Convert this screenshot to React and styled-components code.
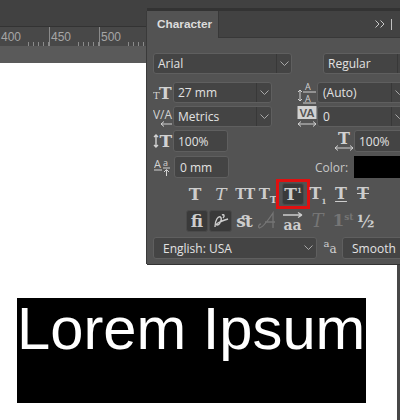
import React from 'react'
import styled, { createGlobalStyle } from 'styled-components'

const Global = createGlobalStyle`
  html, body {
    margin: 0;
    padding: 0;
    background: #fff;
  }
  body {
    font-family: 'Open Sans', 'Liberation Sans', sans-serif;
  }
  * {
    box-sizing: border-box;
  }
`

const Page = styled.div`
  position: relative;
  width: 400px;
  height: 420px;
  overflow: hidden;
  display: flex;
  flex-direction: column;
`

const TopBar = styled.div`
  height: 27px;
  background: #414141;
  border-bottom: 1px solid #333;
`

const Ruler = styled.div`
  height: 19px;
  display: flex;
  margin-left: -1px;
  width: 402px;
  background: #484848;
`

const RulerCell = styled.div`
  width: 50px;
  height: 19px;
  padding: 3px 0 0 1px;
  border-left: 1px solid #8a8a8a;
  font: 12px/14px 'Liberation Sans', sans-serif;
  color: #a6a6a6;
  background-image: repeating-linear-gradient(to right, transparent 0 4px, #8a8a8a 4px 5px);
  background-size: 25px 4px;
  background-position: 24px bottom;
  background-repeat: no-repeat;
`

const Strip = styled.div`
  height: 17px;
  background: #5a5a5a;
`

const Canvas = styled.div`
  flex: 1;
  background: #fff;
  border-right: 3px solid #474747;
  padding: 235px 0 0 17px;
`

const Poster = styled.div`
  width: 349px;
  height: 105px;
  background: #000;
  color: #fff;
  font: 59.7px/61px 'Liberation Sans', Arial, sans-serif;
  white-space: nowrap;
`

const Panel = styled.div`
  position: absolute;
  left: 147px;
  top: 11px;
  width: 270px;
  height: 253px;
  background: #535353;
  box-shadow: 0 -3px 0 #333, -1px 0 0 #3a3a3a, 0 1px 0 #333;
`

const PanelHead = styled.div`
  height: 27px;
  display: flex;
  align-items: center;
  background: #424242;
  border-bottom: 1px solid #383838;
`

const Tab = styled.div`
  width: 72px;
  height: 27px;
  padding-left: 10px;
  background: #535353;
  border-right: 1px solid #383838;
  font: bold 11.8px/27px 'Liberation Sans', sans-serif;
  color: #dcdcdc;
`

const HeadTools = styled.div`
  margin-left: 156px;
  display: flex;
  align-items: center;
  gap: 6px;
  color: #c8c8c8;
`

const HeadBar = styled.span`
  width: 1px;
  height: 11px;
  background: #c0c0c0;
`

const PanelBody = styled.div`
  padding: 15px 0 0 6px;
`

const Row = styled.div`
  display: grid;
  grid-template-columns: ${p => p.$split}px 1fr;
  height: ${p => p.$h}px;
  margin-bottom: ${p => p.$gap}px;
`

const Group = styled.div`
  display: flex;
  align-items: center;
  height: 100%;
`

const IconSlot = styled.div`
  width: ${p => p.$w || 20}px;
  height: 21px;
  flex: none;
  display: flex;
  align-items: center;
  justify-content: center;
  color: #d2d2d2;
`

const Box = styled.div`
  width: ${p => p.$w}px;
  height: 100%;
  flex: none;
  margin-left: ${p => p.$ml || 0}px;
  display: flex;
  align-items: center;
  background: #444;
  border: 1px solid #5f5f5f;
  border-radius: 3px;
  font-size: 12px;
  color: #e2e2e2;
`

const BoxText = styled.span`
  flex: 1;
  padding-left: ${p => p.$pl || 4}px;
  white-space: nowrap;
  overflow: hidden;
`

const Chevron = styled.span`
  width: ${p => p.$w || 15}px;
  height: 100%;
  flex: none;
  display: flex;
  align-items: center;
  justify-content: center;
  border-left: ${p => (p.$plain ? 'none' : '1px solid #383838')};
  color: #a8a8a8;
`

const ColorLabel = styled.span`
  width: 39px;
  font-size: 12px;
  color: #c8c8c8;
`

const Swatch = styled.div`
  width: 60px;
  height: 100%;
  background: #000;
`

const GlyphRow = styled.div`
  display: flex;
  height: ${p => p.$h}px;
  margin: ${p => p.$m};
  align-items: center;
`

const Glyph = styled.div`
  position: relative;
  width: ${p => p.$w}px;
  height: 22px;
  flex: none;
  display: flex;
  align-items: center;
  justify-content: center;
  color: ${p => (p.$off ? '#757575' : '#cdcdcd')};
  font-family: 'DejaVu Serif', serif;
  font-weight: bold;
  font-size: 17px;
  line-height: 22px;
`

const Pressed = styled(Glyph)`
  background: #3a3a3a;
  border: 1px solid #4a4a4a;
  border-radius: 3px;
  margin: 0 ${p => p.$mx || 0}px;
`

const Highlight = styled.span`
  position: absolute;
  left: -7px;
  top: -5px;
  width: 34px;
  height: 30px;
  border: 3px solid #e01010;
`

const Small = styled.span`
  font-size: ${p => p.$s}px;
  font-weight: ${p => p.$w || 'bold'};
  font-style: ${p => p.$i || 'normal'};
  align-self: ${p => p.$a || 'center'};
  line-height: 1;
  margin-top: ${p => p.$mt || 0}px;
  letter-spacing: ${p => p.$ls || 0}px;
  text-decoration: ${p => p.$d || 'none'};
  text-underline-offset: 2px;
`

const AaMark = styled.span`
  display: flex;
  font-family: 'DejaVu Serif', serif;
  color: #cfcfcf;
  line-height: 1;
`

const AaRaised = styled.span`
  font-size: 10px;
  margin-top: -3px;
`

const AaLow = styled.span`
  font-size: 12px;
  margin-top: 1px;
`

const SvgText = styled.text`
  font-family: 'DejaVu Serif', serif;
  font-weight: ${p => p.$w || 'bold'};
  fill: currentColor;
`

const SansText = styled.text`
  font-family: 'Open Sans', sans-serif;
  fill: currentColor;
`

const ChevronDown = () => (
  <svg width="9" height="6" viewBox="0 0 9 6" fill="none" stroke="currentColor">
    <path d="M0.5 0.5 L4.5 4.5 L8.5 0.5" />
  </svg>
)

const ChevronsOut = () => (
  <svg width="10" height="8" viewBox="0 0 10 8" fill="none" stroke="currentColor">
    <path d="M0.5 0.5 L4 4 L0.5 7.5 M5.5 0.5 L9 4 L5.5 7.5" />
  </svg>
)

const SizeIcon = () => (
  <svg width="20" height="20" viewBox="0 0 20 20">
    <SvgText x="0" y="16" fontSize="10" $w="normal">T</SvgText>
    <SvgText x="6" y="16" fontSize="17">T</SvgText>
  </svg>
)

const KernIcon = () => (
  <svg width="20" height="20" viewBox="0 0 20 20" stroke="none">
    <SansText x="0" y="12" fontSize="12" textLength="19" lengthAdjust="spacingAndGlyphs">V/A</SansText>
    <path d="M8 17 H19 M8 17 L11 14.5 M8 17 L11 19.5" stroke="currentColor" fill="none" />
  </svg>
)

const LeadingIcon = () => (
  <svg width="20" height="24" viewBox="0 0 20 24">
    <SansText x="8" y="9" fontSize="9">A</SansText>
    <SansText x="8" y="21" fontSize="9">A</SansText>
    <path d="M6 11 H19 M6 22 H19" stroke="currentColor" fill="none" />
    <path d="M3 9 V20 M1 11 L3 9 L5 11 M1 18 L3 20 L5 18" stroke="currentColor" fill="none" />
  </svg>
)

const TrackIcon = () => (
  <svg width="20" height="22" viewBox="0 0 20 22">
    <rect x="0.5" y="0" width="19" height="13" fill="#d2d2d2" />
    <text x="10" y="11" fontSize="11.5" fontWeight="bold" fontFamily="'Liberation Sans', sans-serif" textAnchor="middle" fill="#535353">VA</text>
    <path d="M1 18 H19 M1 18 L4 15.5 M1 18 L4 20.5 M19 18 L16 15.5 M19 18 L16 20.5" stroke="currentColor" fill="none" />
  </svg>
)

const VScaleIcon = () => (
  <svg width="20" height="20" viewBox="0 0 20 20">
    <SvgText x="6.5" y="16" fontSize="17">T</SvgText>
    <path d="M3 4 V16 M1 6 L3 4 L5 6 M1 14 L3 16 L5 14" stroke="currentColor" strokeWidth="1.4" fill="none" />
  </svg>
)

const HScaleIcon = () => (
  <svg width="20" height="24" viewBox="0 -2 20 24">
    <SvgText x="4" y="13" fontSize="16">T</SvgText>
    <path d="M1 17 H19 M1 17 L4 14.5 M1 17 L4 19.5 M19 17 L16 14.5 M19 17 L16 19.5" stroke="currentColor" fill="none" />
  </svg>
)

const BaselineIcon = () => (
  <svg width="18" height="20" viewBox="0 0 18 20">
    <SansText x="0" y="11" fontSize="11">A</SansText>
    <SansText x="9" y="9" fontSize="9">a</SansText>
    <path d="M0 13 H8 M9 11 H16" stroke="currentColor" fill="none" />
    <path d="M12.5 19 V13 M10 15 L12.5 12.5 L15 15" stroke="currentColor" fill="none" />
  </svg>
)

const SwashIcon = () => (
  <svg width="18" height="18" viewBox="0 0 18 18" fill="none" stroke="currentColor" strokeWidth="1.4">
    <path d="M3 15 C3 8 6 4 8.5 5 C10.5 7 8 13 5 13 C3 12 7 10 16 7" />
    <path d="M10 3 C12 2 13 4 11 6" />
  </svg>
)

const ScriptIcon = () => (
  <svg width="22" height="20" viewBox="0 0 22 20" fill="none" stroke="currentColor" strokeWidth="1.3">
    <path d="M2 17 C6 17 12 8 16 2 L16 17 M8 11 H18" />
    <path d="M2 17 C1 15 2 13 4 13" />
  </svg>
)

const ArrowAaIcon = () => (
  <svg width="22" height="22" viewBox="0 0 22 22">
    <SvgText x="1.5" y="20" fontSize="14">aa</SvgText>
    <path d="M1 5 H20 M20 5 L16 2.5 M20 5 L16 7.5" stroke="currentColor" strokeWidth="1.4" fill="none" />
  </svg>
)

const Select = ({ w, ml, pl, children }) => (
  <Box $w={w} $ml={ml}>
    <BoxText $pl={pl}>{children}</BoxText>
    <Chevron>
      <ChevronDown />
    </Chevron>
  </Box>
)

const Field = ({ w, ml, pl, children }) => (
  <Box $w={w} $ml={ml}>
    <BoxText $pl={pl}>{children}</BoxText>
  </Box>
)

export default function App() {
  return (
    <Page>
      <Global />
      <TopBar />
      <Ruler>
        <RulerCell>400</RulerCell>
        <RulerCell>450</RulerCell>
        <RulerCell>500</RulerCell>
        <RulerCell />
      </Ruler>
      <Strip />
      <Canvas>
        <Poster>Lorem Ipsum</Poster>
      </Canvas>

      <Panel>
        <PanelHead>
          <Tab>Character</Tab>
          <HeadTools>
            <ChevronsOut />
            <HeadBar />
          </HeadTools>
        </PanelHead>
        <PanelBody>
          <Row $split={170} $h={21} $gap={8}>
            <Group>
              <Select w={139}>Arial</Select>
            </Group>
            <Group>
              <Select w={90} pl={4}>Regular</Select>
            </Group>
          </Row>
          <Row $split={144} $h={21} $gap={3}>
            <Group>
              <IconSlot><SizeIcon /></IconSlot>
              <Select w={99}>27 mm</Select>
            </Group>
            <Group>
              <IconSlot><LeadingIcon /></IconSlot>
              <Select w={90} pl={5}>(Auto)</Select>
            </Group>
          </Row>
          <Row $split={144} $h={21} $gap={3}>
            <Group>
              <IconSlot><KernIcon /></IconSlot>
              <Select w={99}>Metrics</Select>
            </Group>
            <Group>
              <IconSlot><TrackIcon /></IconSlot>
              <Select w={90} pl={5}>0</Select>
            </Group>
          </Row>
          <Row $split={181} $h={22} $gap={4}>
            <Group>
              <IconSlot><VScaleIcon /></IconSlot>
              <Field w={55}>100%</Field>
            </Group>
            <Group>
              <IconSlot><HScaleIcon /></IconSlot>
              <Field w={60}>100%</Field>
            </Group>
          </Row>
          <Row $split={162} $h={22} $gap={5}>
            <Group>
              <IconSlot><BaselineIcon /></IconSlot>
              <Field w={55} ml={1} pl={5}>0 mm</Field>
            </Group>
            <Group>
              <ColorLabel>Color:</ColorLabel>
              <Swatch />
            </Group>
          </Row>

          <GlyphRow $h={22} $m="0 0 4px 29px">
            <Glyph $w={26}>T</Glyph>
            <Glyph $w={26}><Small $s={17} $w="normal" $i="italic">T</Small></Glyph>
            <Glyph $w={22}><Small $s={14} $ls={-0.5}>TT</Small></Glyph>
            <Glyph $w={24}><Small $s={15}>T</Small><Small $s={10} $a="flex-end" $mt={-4}>T</Small></Glyph>
            <Pressed $w={22} $mx={2}>
              <Small $s={17}>T</Small><Small $s={7} $a="flex-start" $mt={3}>1</Small>
              <Highlight />
            </Pressed>
            <Glyph $w={24}><Small $s={16}>T</Small><Small $s={7} $a="flex-end" $mt={-5}>1</Small></Glyph>
            <Glyph $w={22}><Small $s={16} $d="underline">T</Small></Glyph>
            <Glyph $w={22}><Small $s={16} $d="line-through">T</Small></Glyph>
          </GlyphRow>

          <GlyphRow $h={23} $m="0 0 5px 33px">
            <Pressed $w={22}>ﬁ</Pressed>
            <Pressed $w={23} $mx={1}><SwashIcon /></Pressed>
            <Glyph $w={23}>ﬆ</Glyph>
            <Glyph $w={24} $off><ScriptIcon /></Glyph>
            <Glyph $w={25}><ArrowAaIcon /></Glyph>
            <Glyph $w={25} $off><Small $s={18} $w="normal" $i="italic">T</Small></Glyph>
            <Glyph $w={26} $off><Small $s={17}>1</Small><Small $s={9} $a="flex-start" $mt={3}>st</Small></Glyph>
            <Glyph $w={19}>½</Glyph>
          </GlyphRow>

          <Row $split={165} $h={22} $gap={0}>
            <Group>
              <Box $w={164}>
                <BoxText $pl={9}>English: USA</BoxText>
                <Chevron $plain><ChevronDown /></Chevron>
              </Box>
            </Group>
            <Group>
              <IconSlot $w={24}>
                <AaMark><AaRaised>a</AaRaised><AaLow>a</AaLow></AaMark>
              </IconSlot>
              <Box $w={70}>
                <BoxText $pl={9}>Smooth</BoxText>
              </Box>
            </Group>
          </Row>
        </PanelBody>
      </Panel>
    </Page>
  )
}
